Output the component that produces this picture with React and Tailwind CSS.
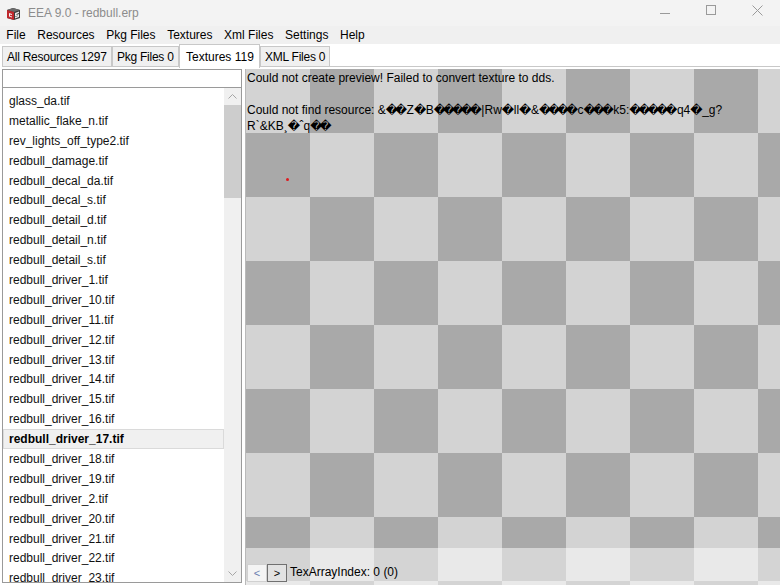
import React from 'react';

const files = [
  'glass_da.tif',
  'metallic_flake_n.tif',
  'rev_lights_off_type2.tif',
  'redbull_damage.tif',
  'redbull_decal_da.tif',
  'redbull_decal_s.tif',
  'redbull_detail_d.tif',
  'redbull_detail_n.tif',
  'redbull_detail_s.tif',
  'redbull_driver_1.tif',
  'redbull_driver_10.tif',
  'redbull_driver_11.tif',
  'redbull_driver_12.tif',
  'redbull_driver_13.tif',
  'redbull_driver_14.tif',
  'redbull_driver_15.tif',
  'redbull_driver_16.tif',
  'redbull_driver_17.tif',
  'redbull_driver_18.tif',
  'redbull_driver_19.tif',
  'redbull_driver_2.tif',
  'redbull_driver_20.tif',
  'redbull_driver_21.tif',
  'redbull_driver_22.tif',
  'redbull_driver_23.tif',
];

const menus = ['File', 'Resources', 'Pkg Files', 'Textures', 'Xml Files', 'Settings', 'Help'];

// garbled resource name: the replacement chars get tighter spacing
const Garbled = ({ text }) =>
  text.split(/(\uFFFD+)/).map((part, i) =>
    part.startsWith('\uFFFD') ? (
      <span key={i} className="tracking-[-3.4px] mr-[3px]">
        {part}
      </span>
    ) : (
      <span key={i}>{part}</span>
    )
  );

const AppIcon = () => (
  <svg width="15" height="14" viewBox="0 0 15 14">
    <path d="M1 3 L7 1 L14 3 L14 11 L8 13 L1 11 Z" fill="#3a3a3a" />
    <path d="M1 3 L7 1 L14 3 L8 5 Z" fill="#6b6b6b" />
    <path d="M1 3 L8 5 L8 13 L1 11 Z" fill="#c0282d" />
    <path d="M3 6 L6 7 L6 8 L4 7.5 L4 9 L6 9.6 L6 10.5 L3 9.6 Z" fill="#f2f2f2" />
    <path d="M9 6 L13 4.6 L13 6 L10.5 6.9 L10.5 8 L13 7 L13 10 L9 11.4 L9 10 L11.8 9 L11.8 8.4 L9 9.4 Z" fill="#e8e8e8" />
  </svg>
);

const Tab = ({ label, width, active }) =>
  active ? (
    <div
      className="h-[24px] bg-white border border-b-0 border-[#c8c8c8] flex items-start pt-[3px] pl-[6px] relative -mb-px whitespace-nowrap"
      style={{ width }}
    >
      {label}
    </div>
  ) : (
    <div
      className="h-[21px] bg-[#f0f0f0] border border-[#c8c8c8] flex items-center pl-[4px] whitespace-nowrap overflow-hidden tracking-[-0.25px]"
      style={{ width }}
    >
      {label}
    </div>
  );

export default function App() {
  return (
    <div
      className="w-[780px] h-[585px] overflow-hidden flex flex-col bg-white text-[12px] text-black"
      style={{ fontFamily: '"Liberation Sans", "DejaVu Sans", sans-serif' }}
    >
      {/* title bar */}
      <div className="h-[26px] bg-[#f3f3f3] flex items-center shrink-0">
        <div className="pl-[6px] pr-[7px] pt-[1px]">
          <AppIcon />
        </div>
        <span className="text-[#8c8c8c]">EEA 9.0 - redbull.erp</span>
        <div className="ml-auto flex items-center h-full text-[#9a9a9a]">
          <div className="w-[46px] h-full flex items-center justify-center">
            <div className="w-[10px] h-px bg-[#9a9a9a]" />
          </div>
          <div className="w-[46px] h-full flex items-center justify-center pb-[6px]">
            <div className="w-[10px] h-[10px] border border-[#9a9a9a]" />
          </div>
          <div className="w-[46px] h-full flex items-center justify-center pb-[6px]">
            <svg width="11" height="11" viewBox="0 0 11 11">
              <path d="M0.5 0.5 L10.5 10.5 M10.5 0.5 L0.5 10.5" stroke="#9a9a9a" strokeWidth="1" />
            </svg>
          </div>
        </div>
      </div>

      {/* menu bar */}
      <div className="h-[18px] bg-[#f0f0f0] flex items-center shrink-0 pl-[0.5px]">
        {menus.map((m) => (
          <div key={m} className="px-[5.8px]">
            {m}
          </div>
        ))}
      </div>

      {/* tabs */}
      <div className="h-[23px] flex items-end pl-[2px] shrink-0">
        <Tab label="All Resources 1297" width={110} />
        <Tab label="Pkg Files 0" width={67} />
        <Tab label="Textures 119" width={81} active />
        <Tab label="XML Files 0" width={70} />
        <div className="flex-1 border-b border-[#c8c8c8]" />
      </div>

      {/* content */}
      <div className="flex-1 flex min-h-0">
        {/* left panel */}
        <div className="w-[245px] shrink-0 flex flex-col pt-[2px] pl-[2px] pr-[3px] pb-[2px]">
          <div className="h-[19px] border border-[#9a9a9a] bg-white shrink-0" />
          <div className="flex-1 border border-[#9a9a9a] border-t-0 flex min-h-0 overflow-hidden">
            <div className="flex-1 pt-[3px]">
              {files.map((f) => {
                const sel = f === 'redbull_driver_17.tif';
                return (
                  <div
                    key={f}
                    className={
                      sel
                        ? 'h-[19.9px] flex items-center pl-[5px] bg-[#f0f0f0] border border-[#dadada] font-bold'
                        : 'h-[19.9px] flex items-center pl-[6px] text-[#111]'
                    }
                  >
                    {f}
                  </div>
                );
              })}
            </div>
            <div className="w-[17px] shrink-0 bg-[#f0f0f0] flex flex-col">
              <div className="h-[17px] flex items-center justify-center">
                <svg width="9" height="5" viewBox="0 0 9 5">
                  <path d="M0.5 4.5 L4.5 0.5 L8.5 4.5" fill="none" stroke="#a6a6a6" />
                </svg>
              </div>
              <div className="h-[93px] bg-[#cdcdcd]" />
              <div className="flex-1" />
              <div className="h-[17px] flex items-center justify-center">
                <svg width="9" height="5" viewBox="0 0 9 5">
                  <path d="M0.5 0.5 L4.5 4.5 L8.5 0.5" fill="none" stroke="#a6a6a6" />
                </svg>
              </div>
            </div>
          </div>
        </div>

        {/* preview */}
        <div className="flex-1 pt-[2px] flex">
          <div className="flex-1 border-l border-[#b9b9b9] bg-[conic-gradient(#a9a9a9_0_25%,#d3d3d3_0_50%,#a9a9a9_0_75%,#d3d3d3_0)] bg-[length:128px_128px] relative flex flex-col">
            <div className="pl-[1px] pt-[1px] leading-[16px]">
              <div>Could not create preview! Failed to convert texture to dds.</div>
              <div>&nbsp;</div>
              <div>
                <Garbled text="Could not find resource: &��Z�B�����|Rw�ll�&����c���k5:�����q4�_g?" />
              </div>
              <div>
                <Garbled text="R`&KB¸�ˆq��" />
              </div>
            </div>
            <div className="absolute left-[40px] top-[109px] w-[3px] h-[3px] rounded-full bg-[#e0191e]" />
            <div className="mt-auto h-[37px] bg-white/50 flex items-end pb-[3px] pl-px">
              <div className="w-[20px] h-[18px] bg-[#f4f4f4] border border-[#d0d0d0] flex items-center justify-center text-[#6a7fb0] text-[11px]">
                &lt;
              </div>
              <div className="w-[20px] h-[18px] bg-[#e2e2e2] border border-[#707070] flex items-center justify-center text-[11px]">
                &gt;
              </div>
              <div className="pl-[3px] pb-[1px]">TexArrayIndex: 0 (0)</div>
            </div>
          </div>
        </div>
      </div>
    </div>
  );
}
